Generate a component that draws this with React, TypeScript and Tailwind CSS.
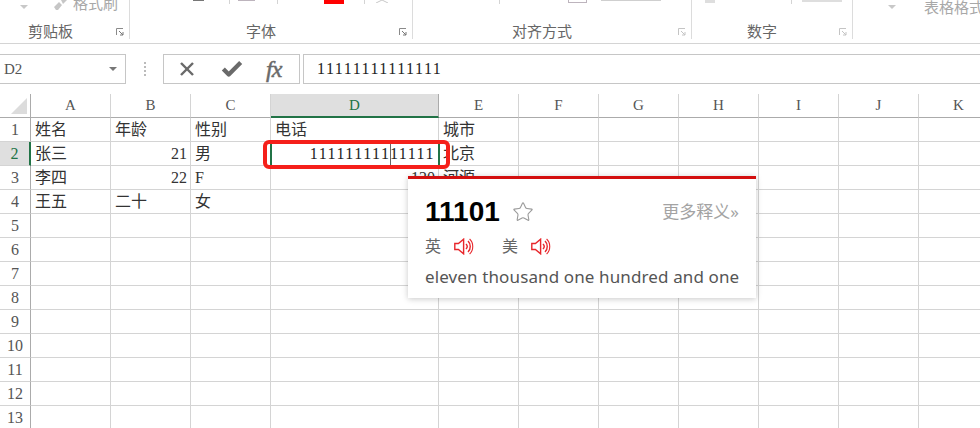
import { Star, Check, X } from 'lucide-react';

const columns = ['A', 'B', 'C', 'D', 'E', 'F', 'G', 'H', 'I', 'J', 'K'];
const rowCount = 13;

// cell contents keyed by column + row
const cells: Record<string, { text: string; num?: boolean }> = {
    A1: { text: '姓名' }, B1: { text: '年龄' }, C1: { text: '性别' }, D1: { text: '电话' }, E1: { text: '城市' },
    A2: { text: '张三' }, B2: { text: '21', num: true }, C2: { text: '男' }, E2: { text: '北京' },
    A3: { text: '李四' }, B3: { text: '22', num: true }, C3: { text: 'F' }, D3: { text: '120', num: true }, E3: { text: '河源' },
    A4: { text: '王五' }, B4: { text: '二十' }, C4: { text: '女' },
};

const Launcher = ({ light }: { light?: boolean }) => (
    <svg width="8" height="8" viewBox="0 0 8 8" className="absolute right-[5px] bottom-[3px]">
        <path d="M0.5 7V0.5H7" fill="none" stroke={light ? '#c4c4c4' : '#8a8a8a'} />
        <path d="M3 3L7 7M7 4V7H4" fill="none" stroke={light ? '#c4c4c4' : '#777'} />
    </svg>
);

const Speaker = () => (
    <svg width="20" height="17" viewBox="0 0 20 17" fill="none" stroke="#e8262b" strokeWidth="1.4">
        <path d="M0.8 5.5H4.4L9.6 1.2V15.8L4.4 11.5H0.8Z" />
        <path d="M12 6C13.4 7.4 13.4 9.6 12 11" />
        <path d="M14 3C17 5.8 17 11.2 14 14" />
        <path d="M15.6 1C19.8 4.8 19.8 12.2 15.6 16" strokeWidth="1.1" />
    </svg>
);

const Triangle = () => (
    <div className="w-0 h-0 border-x-[4px] border-x-transparent border-t-[4px] border-t-[#c8c8c8]"></div>
);

const Ribbon = () => (
    <div className="flex h-[44px] border-b border-[#d4d4d4] overflow-hidden font-['Noto_Sans_CJK_SC',sans-serif]">
        {/* clipboard */}
        <div className="relative w-[130px] h-[39px] border-r border-[#dcdcdc] flex flex-col">
            <div className="flex items-start h-[23px] overflow-hidden">
                <div className="ml-[20px] mt-[5px]"><Triangle /></div>
                <svg width="20" height="10" viewBox="0 0 20 10" className="ml-[25px]">
                    <path d="M1 7L6 2L9 5L5 10H3ZM8 0H14L10 4Z" fill="#c6c6c6" />
                </svg>
                <span className="text-[15px] leading-[15px] -mt-[5px] text-[#a8a8a8]">格式刷</span>
            </div>
            <div className="text-[15px] leading-[16px] text-[#666] text-center pr-[28px]">剪贴板</div>
            <Launcher />
        </div>
        {/* font */}
        <div className="relative w-[283px] h-[39px] border-r border-[#dcdcdc] flex flex-col">
            <div className="flex items-start h-[23px] overflow-hidden">
                <div className="ml-[63px] w-[11px] h-px bg-[#777]"></div>
                <div className="ml-[25px] w-px h-[4px] bg-[#d4d4d4]"></div>
                <div className="ml-[8px] w-[17px] h-px bg-[#bdb4bd]"></div>
                <div className="ml-[22px] w-px h-[4px] bg-[#d4d4d4]"></div>
                <div className="ml-[46px] w-[20px] h-[4px] bg-[#ff0000]"></div>
                <div className="ml-[20px] w-px h-[4px] bg-[#d4d4d4]"></div>
                <svg width="12" height="3" viewBox="0 0 12 3" className="ml-[11px]">
                    <path d="M0 3L6 0L12 3" fill="none" stroke="#c8c8c8" />
                </svg>
            </div>
            <div className="text-[15px] leading-[16px] text-[#666] text-center pr-[20px]">字体</div>
            <Launcher />
        </div>
        {/* alignment */}
        <div className="relative w-[279px] h-[39px] border-r border-[#dcdcdc] flex flex-col">
            <div className="flex items-start h-[23px] overflow-hidden">
                <div className="ml-[86px] w-px h-[4px] bg-[#d4d4d4]"></div>
                <div className="ml-[68px] w-[19px] h-[3px] border-x border-b border-[#bdb4bd]"></div>
                <div className="ml-[14px] w-[60px] h-px bg-[#cfcfcf]"></div>
            </div>
            <div className="text-[15px] leading-[16px] text-[#666] text-center pr-[20px]">对齐方式</div>
            <Launcher light />
        </div>
        {/* number */}
        <div className="relative w-[161px] h-[39px] border-r border-[#dcdcdc] flex flex-col">
            <div className="flex items-start h-[23px] overflow-hidden">
                <div className="ml-[13px] w-[10px] h-[3px] bg-[#dedede]"></div>
                <div className="ml-[76px] w-px h-[4px] bg-[#d4d4d4]"></div>
                <div className="ml-[10px] w-[40px] h-[2px] bg-[#dedede]"></div>
            </div>
            <div className="text-[15px] leading-[16px] text-[#666] text-center pr-[20px]">数字</div>
            <Launcher light />
        </div>
        {/* styles */}
        <div className="flex-1 flex items-start overflow-hidden">
            <div className="ml-[35px] mt-[5px]"><Triangle /></div>
            <span className="ml-[28px] text-[15px] leading-[15px] -mt-px text-[#a8a8a8] whitespace-nowrap">表格格式</span>
        </div>
    </div>
);

const FormulaBar = () => (
    <div className="flex items-stretch h-[30px] mt-[10px] mb-[10px] font-['Liberation_Serif','Noto_Sans_CJK_SC',serif]">
        <div className="w-[126px] border-y border-r border-[#c6c6c6] flex items-center justify-between pl-[4px] pr-[8px] text-[15px] text-[#555]">
            D2
            <div className="w-0 h-0 border-x-[4px] border-x-transparent border-t-[4px] border-t-[#777]"></div>
        </div>
        <div className="w-[37px] flex flex-col items-center justify-center gap-[2px]">
            <div className="w-[2px] h-[2px] bg-[#bbb]"></div>
            <div className="w-[2px] h-[2px] bg-[#bbb]"></div>
            <div className="w-[2px] h-[2px] bg-[#bbb]"></div>
            <div className="w-[2px] h-[2px] bg-[#bbb]"></div>
        </div>
        <div className="w-[137px] border border-[#c6c6c6] flex items-center pl-[11px]">
            <X size={24} strokeWidth={2.4} color="#6a6a6a" strokeLinecap="butt" />
            <Check size={26} strokeWidth={4} color="#6a6a6a" strokeLinecap="butt" className="ml-[20px]" />
            <span className="ml-[21px] text-[24px] leading-[24px] italic text-[#6a6a6a] tracking-[-1px] [-webkit-text-stroke:0.5px_#6a6a6a]">fx</span>
        </div>
        <div className="flex-1 ml-[3px] border-y border-l border-[#c6c6c6] flex items-center pl-[13px] text-[16px] tracking-[1.5px] text-[#222]">
            11111111111111
        </div>
    </div>
);

const Sheet = () => (
    <div className="grid grid-cols-[31px_80px_80px_80px_168px_repeat(7,80px)] auto-rows-[24px] font-['Liberation_Serif','Noto_Sans_CJK_SC',serif] text-[16px] text-[#333]">
        <div className="border-r border-b border-[#ababab] flex items-end justify-end pr-[3px] pb-[3px]">
            <div className="w-0 h-0 border-l-[16px] border-l-transparent border-b-[16px] border-b-[#dcdcdc]"></div>
        </div>
        {columns.map((col) => (
            <div
                key={col}
                className={`flex items-center justify-center text-[15px] ${col === 'D' ? 'bg-[#dfdfdf] border-b-2 border-b-[#217346] border-r border-r-[#ababab] text-[#217346]' : 'text-[#555] border-r border-r-[#d4d4d4] border-b border-b-[#ababab]'}`}
            >
                {col}
            </div>
        ))}
        {Array.from({ length: rowCount }, (_, i) => i + 1).flatMap((row) => [
            <div
                key={`h${row}`}
                className={`flex items-center justify-center text-[16px] border-b border-b-[#d4d4d4] ${row === 2 ? 'bg-[#dfdfdf] border-r-2 border-r-[#217346] text-[#217346]' : 'text-[#555] border-r border-r-[#ababab]'}`}
            >
                {row}
            </div>,
            ...columns.map((col) => {
                const cell = cells[col + row];
                if (col === 'D' && row === 2) {
                    return (
                        <div key={col + row} className="relative flex items-center justify-end pr-[3px] border-x-2 border-x-[#217346] border-b border-b-[#d4d4d4] -ml-px -mr-px text-[16px] tracking-[1.5px] text-[#222]">
                            11111111111111
                            <div className="absolute left-[118px] top-0 bottom-0 w-px bg-[#666]"></div>
                        </div>
                    );
                }
                return (
                    <div
                        key={col + row}
                        className={`flex items-center border-r border-b border-[#d4d4d4] whitespace-nowrap ${cell?.num ? 'justify-end pr-[3px]' : 'pl-[4px]'}`}
                    >
                        {cell?.text}
                    </div>
                );
            }),
        ])}
    </div>
);

const Popup = () => (
    <div className="absolute left-[408px] top-[176px] w-[348px] h-[122px] bg-white border-t-[3px] border-t-[#d30f0f] shadow-[0_1px_6px_rgba(0,0,0,0.22)] px-[17px] font-['Noto_Sans','Noto_Sans_CJK_SC',sans-serif]">
        <div className="flex items-center mt-[18px] h-[30px]">
            <span className="font-['Liberation_Sans',sans-serif] font-bold text-[28px] leading-[30px] text-black">11101</span>
            <Star size={22} strokeWidth={1.2} color="#9a9a9a" className="ml-[12px]" />
            <span className="ml-auto text-[17px] text-[#a3a3a3]">更多释义»</span>
        </div>
        <div className="flex items-center mt-[7px] h-[24px] text-[16px] text-[#666]">
            <span>英</span>
            <div className="ml-[13px]"><Speaker /></div>
            <span className="ml-[28px]">美</span>
            <div className="ml-[13px]"><Speaker /></div>
        </div>
        <div className="mt-[7px] text-[17px] leading-[24px] tracking-[0.12px] text-[#555] whitespace-nowrap">eleven thousand one hundred and one</div>
    </div>
);

const App = () => {
    return (
        <div className="relative w-[980px] h-[428px] bg-white overflow-hidden">
            <Ribbon />
            <FormulaBar />
            <Sheet />
            {/* red annotation drawn over the active cell */}
            <div className="absolute left-[263px] top-[140px] w-[187px] h-[29px] border-[4px] border-[#f5201a] rounded-[6px]"></div>
            <Popup />
        </div>
    );
};

export default App;
